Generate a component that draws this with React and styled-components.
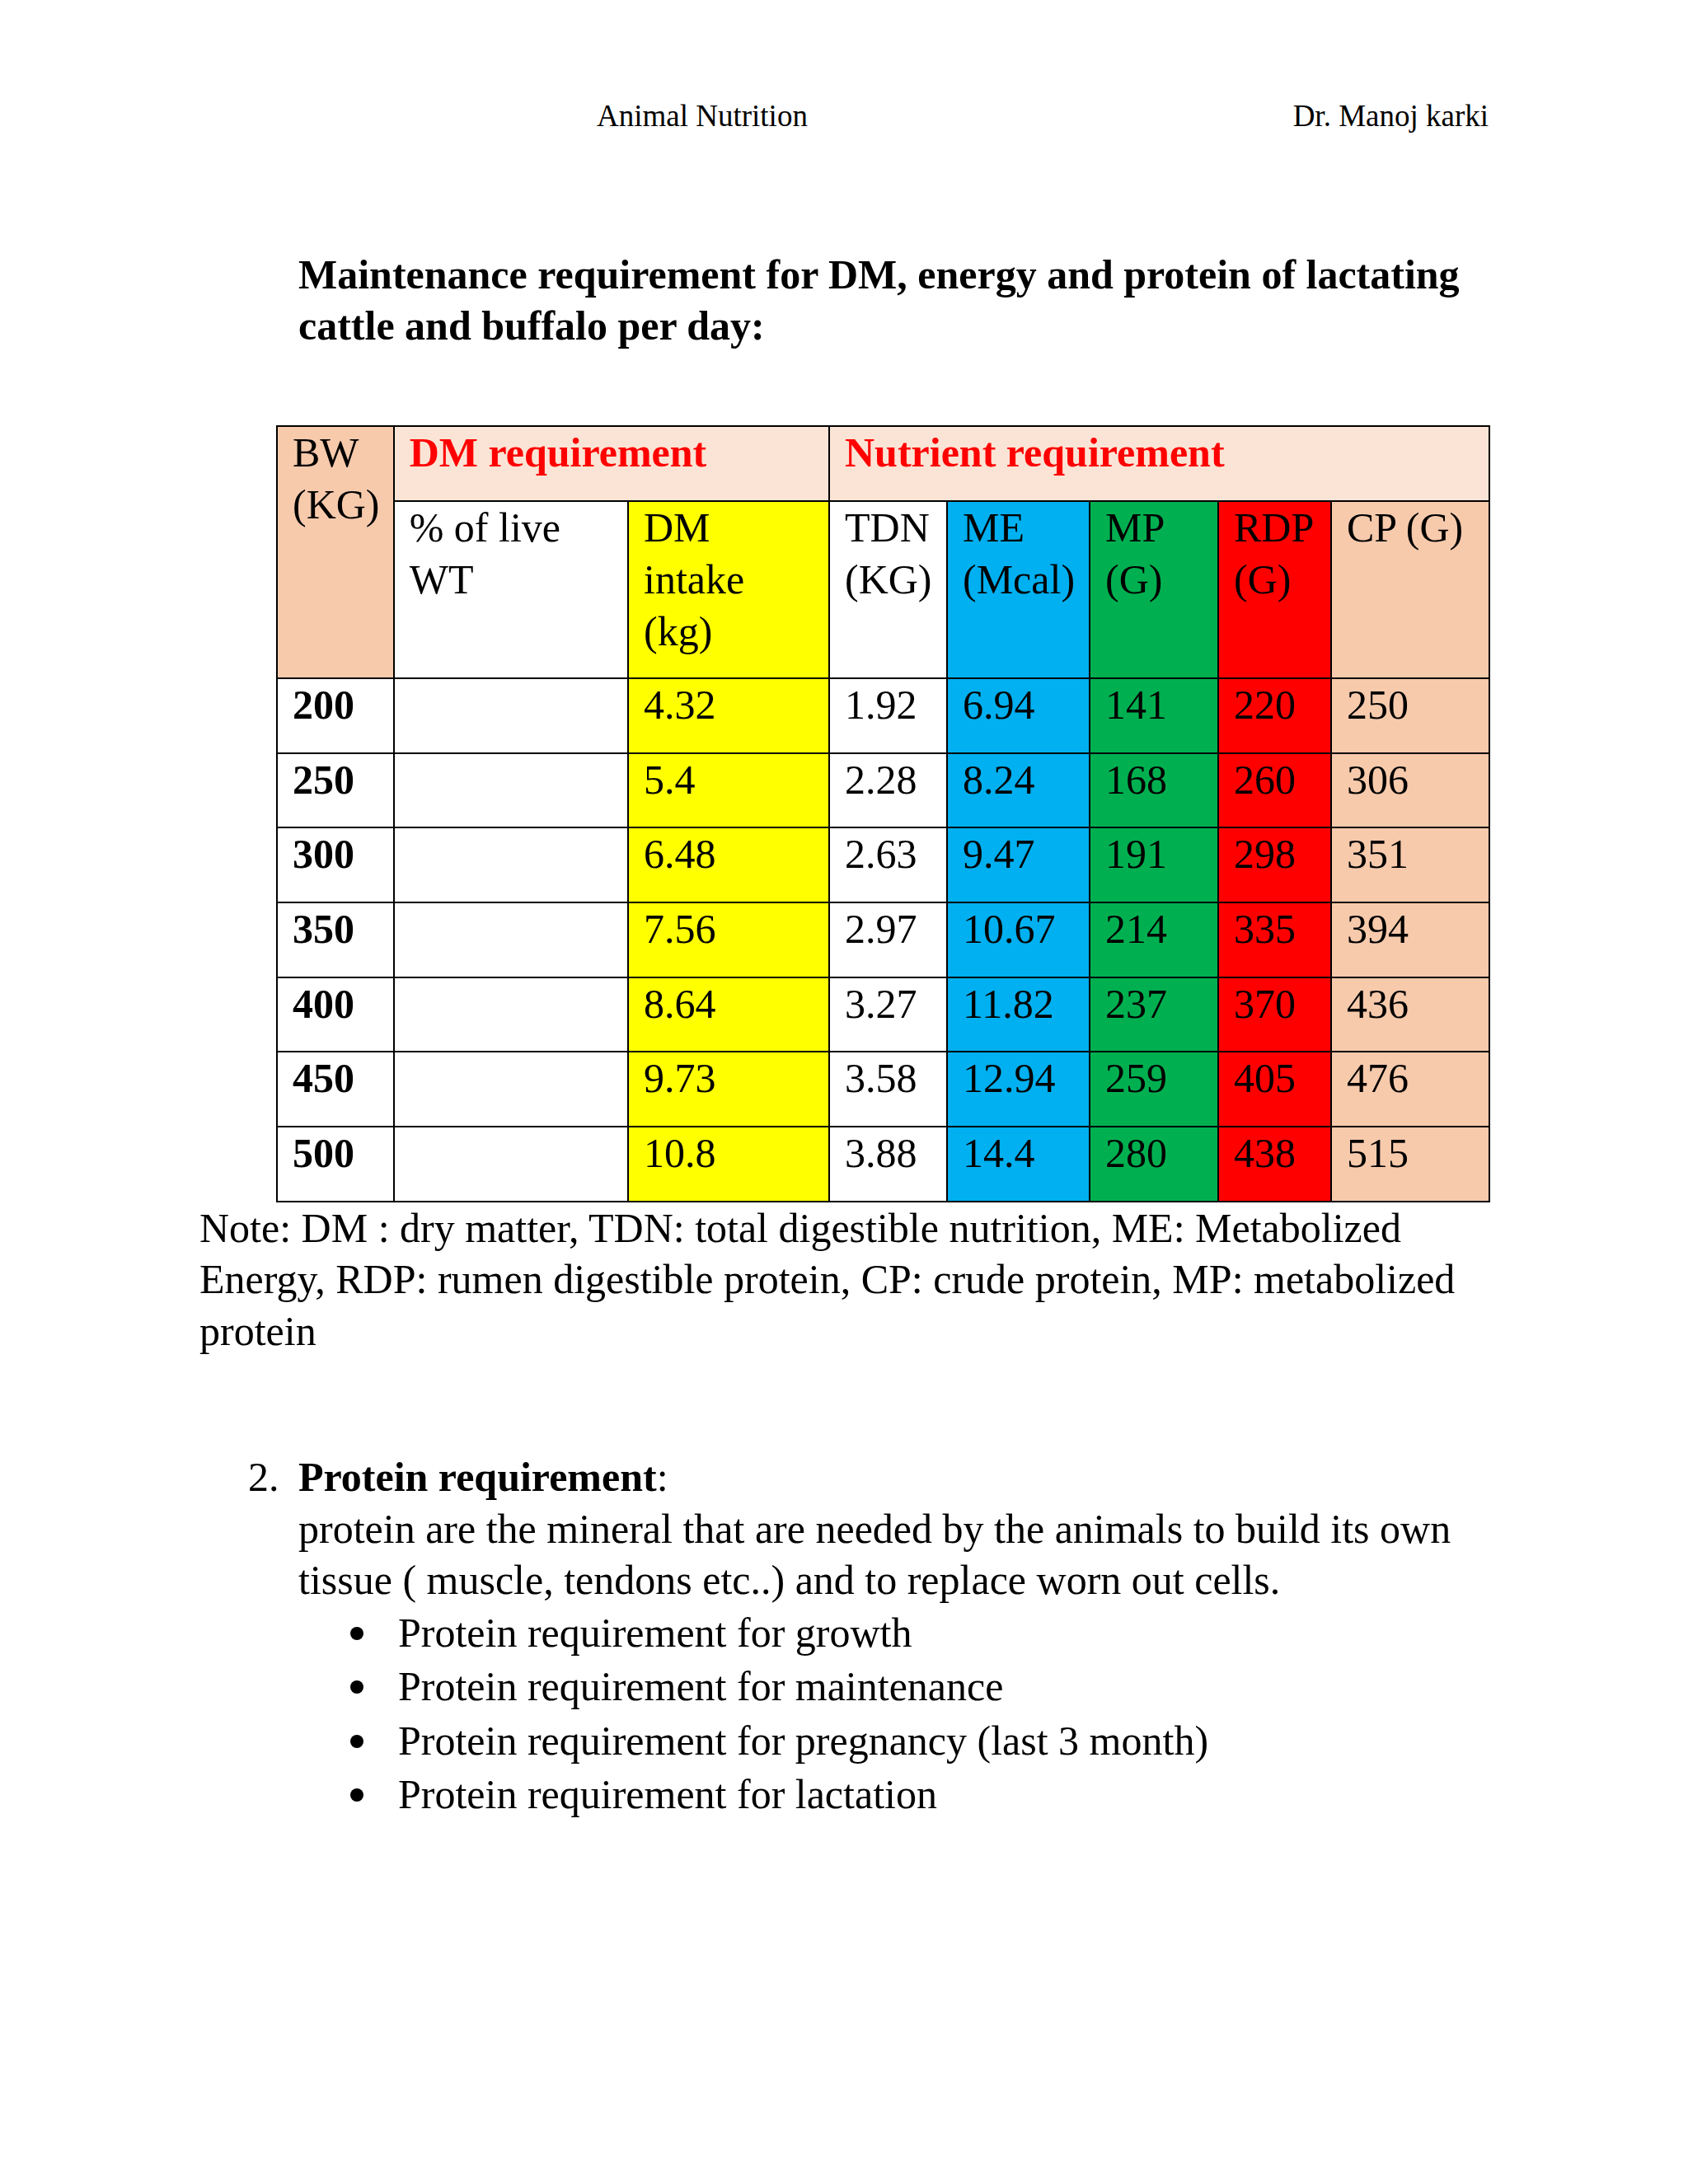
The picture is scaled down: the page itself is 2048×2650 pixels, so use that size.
import styled, { createGlobalStyle } from "styled-components";

const GlobalStyle = createGlobalStyle`
  body {
    margin: 0;
    background: #fff;
  }
`;

const Page = styled.div`
  width: 2048px;
  min-height: 2650px;
  box-sizing: border-box;
  padding: 119px 242px 0;
  font-family: "Liberation Serif", "Times New Roman", serif;
  color: #000;
`;

const RunningHeader = styled.div`
  display: flex;
  justify-content: space-between;
  padding-left: 482px;
  font-size: 37px;
  line-height: 43px;
`;

const Title = styled.h1`
  margin: 140px 0 0 120px;
  font-size: 50px;
  line-height: 62px;
  font-weight: 700;
`;

const Table = styled.table`
  margin: 90px 0 0 93px;
  width: 1471px;
  table-layout: fixed;
  border-collapse: collapse;
  font-size: 50px;
  line-height: 63px;
`;

const Row = styled.tr`
  height: ${(p) => p.$h || 90.7}px;
`;

const Cell = styled.td`
  border: 2px solid #000;
  padding: 0 10px 0 18px;
  vertical-align: top;
  text-align: left;
  white-space: nowrap;
  background: ${(p) => p.$bg || "#fff"};
  color: ${(p) => (p.$red ? "#ff0000" : "#000")};
  font-weight: ${(p) => (p.$bold ? 700 : 400)};
`;

const Note = styled.p`
  margin: 0;
  font-size: 50px;
  line-height: 62.5px;
`;

const Section = styled.section`
  margin-top: 115px;
  font-size: 50px;
`;

const Heading = styled.div`
  display: flex;
  padding-left: 59px;
  line-height: 62.5px;
`;

const Num = styled.span`
  width: 61px;
`;

const Para = styled.p`
  margin: 0 0 0 120px;
  line-height: 62.5px;
`;

const BulletList = styled.ul`
  margin: 0;
  padding: 0;
  list-style: none;
`;

const BulletItem = styled.li`
  padding-left: 183px;
  line-height: 65.5px;
`;

const Dot = styled.span`
  display: inline-block;
  width: 16px;
  height: 16px;
  border-radius: 50%;
  background: #000;
  margin-right: 42px;
  vertical-align: 8px;
`;

const C = {
  peach: "#f7caac",
  light: "#fbe4d5",
  yellow: "#ffff00",
  blue: "#00b0f0",
  green: "#00b050",
  red: "#ff0000",
};

const cols = [141.7, 284.3, 244, 143, 173, 156, 137, 192];

const rows = [
  ["200", "4.32", "1.92", "6.94", "141", "220", "250"],
  ["250", "5.4", "2.28", "8.24", "168", "260", "306"],
  ["300", "6.48", "2.63", "9.47", "191", "298", "351"],
  ["350", "7.56", "2.97", "10.67", "214", "335", "394"],
  ["400", "8.64", "3.27", "11.82", "237", "370", "436"],
  ["450", "9.73", "3.58", "12.94", "259", "405", "476"],
  ["500", "10.8", "3.88", "14.4", "280", "438", "515"],
];

const bullets = [
  "Protein requirement for growth",
  "Protein requirement for maintenance",
  "Protein requirement for pregnancy (last 3 month)",
  "Protein requirement for lactation",
];

export default function App() {
  return (
    <Page>
      <GlobalStyle />
      <RunningHeader>
        <span>Animal Nutrition</span>
        <span>Dr. Manoj karki</span>
      </RunningHeader>

      <Title>
        Maintenance requirement for DM, energy and protein of lactating
        cattle and buffalo per day:
      </Title>

      <Table>
        <colgroup>
          {cols.map((w, i) => (
            <col key={i} style={{ width: w }} />
          ))}
        </colgroup>
        <thead>
          <Row $h={91}>
            <Cell as="th" rowSpan={2} $bg={C.peach}>
              BW
              <br />
              (KG)
            </Cell>
            <Cell as="th" colSpan={2} $bg={C.light} $red $bold>
              DM requirement
            </Cell>
            <Cell as="th" colSpan={5} $bg={C.light} $red $bold>
              Nutrient requirement
            </Cell>
          </Row>
          <Row $h={215}>
            <Cell as="th">
              % of live
              <br />
              WT
            </Cell>
            <Cell as="th" $bg={C.yellow}>
              DM
              <br />
              intake
              <br />
              (kg)
            </Cell>
            <Cell as="th">
              TDN
              <br />
              (KG)
            </Cell>
            <Cell as="th" $bg={C.blue}>
              ME
              <br />
              (Mcal)
            </Cell>
            <Cell as="th" $bg={C.green}>
              MP
              <br />
              (G)
            </Cell>
            <Cell as="th" $bg={C.red}>
              RDP
              <br />
              (G)
            </Cell>
            <Cell as="th" $bg={C.peach}>
              CP (G)
            </Cell>
          </Row>
        </thead>
        <tbody>
          {rows.map(([bw, dm, tdn, me, mp, rdp, cp]) => (
            <Row key={bw}>
              <Cell $bold>{bw}</Cell>
              <Cell />
              <Cell $bg={C.yellow}>{dm}</Cell>
              <Cell>{tdn}</Cell>
              <Cell $bg={C.blue}>{me}</Cell>
              <Cell $bg={C.green}>{mp}</Cell>
              <Cell $bg={C.red}>{rdp}</Cell>
              <Cell $bg={C.peach}>{cp}</Cell>
            </Row>
          ))}
        </tbody>
      </Table>

      <Note>
        Note: DM : dry matter, TDN: total digestible nutrition, ME: Metabolized
        Energy, RDP: rumen digestible protein, CP: crude protein, MP: metabolized
        protein
      </Note>

      <Section>
        <Heading>
          <Num>2.</Num>
          <span>
            <b>Protein requirement</b>:
          </span>
        </Heading>
        <Para>
          protein are the mineral that are needed by the animals to build its own
          tissue ( muscle, tendons etc..) and to replace worn out cells.
        </Para>
        <BulletList>
          {bullets.map((t) => (
            <BulletItem key={t}>
              <Dot />
              {t}
            </BulletItem>
          ))}
        </BulletList>
      </Section>
    </Page>
  );
}
